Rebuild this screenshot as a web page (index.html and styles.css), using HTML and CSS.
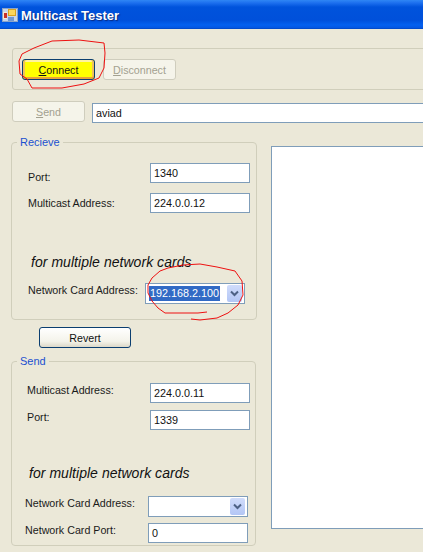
FILE: index.html
```html
<!DOCTYPE html>
<html lang="en">
<head>
<meta charset="utf-8">
<title>Multicast Tester</title>
<link rel="stylesheet" href="styles.css">
</head>
<body>
<header class="titlebar">
  <svg class="appicon" width="16" height="14" viewBox="0 0 16 14">
    <rect x="0" y="0" width="16" height="14" fill="#c9d6ea"/>
    <rect x="0.5" y="0.5" width="15" height="13" fill="none" stroke="#8ba4c8"/>
    <rect x="1" y="4" width="4" height="7" fill="#f2ead8"/>
    <rect x="2" y="5" width="3" height="5" fill="#c8302a"/>
    <rect x="6" y="1" width="8" height="7" fill="#d9a21f"/>
    <rect x="7" y="2" width="6" height="5" fill="#fbd65c"/>
    <rect x="6" y="9" width="6" height="4" fill="#6f97d2"/>
  </svg>
  <span class="title">Multicast Tester</span>
</header>
<main class="client">
  <div class="toolbar">
    <button class="btn btn-connect" type="button"><u>C</u>onnect</button>
    <button class="btn btn-off" type="button"><u>D</u>isconnect</button>
  </div>
  <div class="sendrow">
    <button class="btn btn-off" type="button"><u>S</u>end</button>
    <div class="field field-wide">aviad</div>
  </div>
  <div class="panes">
    <div class="leftcol">
      <fieldset class="group group-rx">
        <legend>Recieve</legend>
        <div class="row row-a"><label class="lab lab-port">Port:</label><div class="field">1340</div></div>
        <div class="row row-b"><label class="lab">Multicast Address:</label><div class="field">224.0.0.12</div></div>
        <p class="note note-rx">for multiple network cards</p>
        <div class="row row-c"><label class="lab lab-short">Network Card Address:</label>
          <div class="combo"><span class="sel">192.168.2.100</span>
            <span class="drop"><svg width="9" height="7" viewBox="0 0 9 7"><path d="M1 1.5 4.5 5 8 1.5" fill="none" stroke="#4d6185" stroke-width="2"/></svg></span></div>
        </div>
      </fieldset>
      <button class="btn btn-revert" type="button">Revert</button>
      <fieldset class="group group-tx">
        <legend>Send</legend>
        <div class="row row-d"><label class="lab lab-up">Multicast Address:</label><div class="field">224.0.0.11</div></div>
        <div class="row row-e"><label class="lab lab-up">Port:</label><div class="field">1339</div></div>
        <p class="note note-tx">for multiple network cards</p>
        <div class="row row-f"><label class="lab lab-up lab-out">Network Card Address:</label>
          <div class="combo combo-tx"><span class="drop"><svg width="9" height="7" viewBox="0 0 9 7"><path d="M1 1.5 4.5 5 8 1.5" fill="none" stroke="#4d6185" stroke-width="2"/></svg></span></div>
        </div>
        <div class="row row-g"><label class="lab lab-up lab-out">Network Card Port:</label><div class="field">0</div></div>
      </fieldset>
    </div>
    <div class="output"></div>
  </div>
</main>
<svg class="scribbles" width="423" height="552" viewBox="0 0 423 552">
  <path d="M79 40 104 43 105 53 104 68 99 78 84 84 62 88 32 88 27 79 20 74 19 61 22 54 34 48 52 41Z" />
  <path d="M207 312 198 313 177 313 165 313 158 308 152 301 148 293 148 285 152 278 160 271 168 268 183 265 200 264 217 267 235 271 242 281 243 295 238 305 228 313 217 318 200 320 191 319" />
</svg>
</body>
</html>
```
FILE: styles.css
```css
* { box-sizing: border-box; }
html, body { margin: 0; height: 552px; overflow: hidden; }
body {
  position: relative;
  background: #ebe8d8;
  font: 10.7px "Liberation Sans", Arial, sans-serif;
  color: #1a1a1a;
}
.titlebar {
  height: 29px;
  display: flex;
  align-items: center;
  padding: 1px 0 0 2px;
  gap: 3px;
  background: linear-gradient(#2f86f5 0, #1c6fee 3px, #0053dc 7px, #0050da 20px, #0461f0 25px, #0556e0 28px, #0042b8 29px);
}
.appicon { flex: none; }
.title {
  color: #fff;
  font-weight: bold;
  font-size: 13px;
  text-shadow: 1px 1px 1px #0a2a80;
}
.client { width: 423px; }
.toolbar {
  width: 500px;
  height: 42px;
  margin: 19px 0 0 12px;
  padding: 10px 0 0 9px;
  display: flex;
  gap: 8px;
  border: 1px solid #d0cebb;
  border-radius: 3px;
}
.btn {
  width: 73px;
  height: 21px;
  padding: 0;
  border-radius: 3px;
  font: inherit;
}
.btn-connect {
  background: #ffff00;
  color: #111;
  border: 1px solid #0b3e70;
  box-shadow: inset 0 -2px 0 #e8a33a, inset 2px 0 0 #efc25a, inset -2px 0 0 #efc25a, inset 0 2px 0 #fff4a0;
}
.btn-off {
  background: #f5f4ea;
  color: #a3a190;
  border: 1px solid #cfcdbd;
}
.btn-revert {
  display: block;
  width: 92px;
  margin: 7px 0 0 28px;
  background: linear-gradient(#ffffff, #f4f3ea 70%, #dcd8c8);
  color: #111;
  border: 1px solid #0b3e70;
}
.sendrow {
  display: flex;
  align-items: flex-start;
  gap: 7px;
  margin: 11px 0 0 12px;
  width: 600px;
}
.field {
  width: 100px;
  height: 20px;
  padding: 0 3px;
  flex: none;
  background: #fff;
  border: 1px solid #7f9db9;
  font-size: 10.8px;
  line-height: 18px;
  color: #111;
}
.field-wide { width: 500px; margin-top: 2px; }
.panes {
  display: flex;
  align-items: flex-start;
  margin: 12px 0 0 11px;
}
.leftcol { width: 246px; flex: none; }
.group {
  margin: 0;
  padding: 0 0 0 16px;
  min-width: 0;
  border: 1px solid #d0cebb;
  border-radius: 4px;
}
.group legend {
  margin-left: -11px;
  padding: 0 3px;
  font-size: 11px;
  line-height: 14px;
  color: #1b50d0;
}
.group-rx { height: 185px; padding-top: 14px; }
.group-tx { width: 245px; height: 192px; margin-top: 6px; padding: 15px 0 0 15px; }
.group-tx legend { margin-left: -10px; }
.row { display: flex; align-items: flex-start; }
.row-b { margin-top: 9px; }
.row-c { margin-top: 12px; }
.row-e { margin-top: 7px; }
.row-f { margin-top: 14px; }
.row-g { margin-top: 6px; }
.lab { width: 122px; flex: none; line-height: 14px; padding-top: 3px; }
.lab-port { padding-top: 7px; }
.lab-short { width: 117px; padding-top: 0; white-space: nowrap; }
.lab-up { width: 123px; padding-top: 0; }
.lab-out { margin-left: -2px; white-space: nowrap; }
.note {
  margin: 40px 0 0 3px;
  font-style: italic;
  font-size: 14px;
  letter-spacing: 0.04px;
  line-height: 18px;
  color: #111;
}
.note-tx { margin: 34px 0 0 2px; }
.combo {
  width: 100px;
  height: 21px;
  display: flex;
  align-items: center;
  justify-content: space-between;
  padding: 2px 2px 2px 3px;
  background: #fff;
  border: 1px solid #7f9db9;
}
.combo-tx { justify-content: flex-end; }
.sel {
  background: #316ac5;
  color: #fff;
  font-size: 10.8px;
  line-height: 15px;
  padding: 0 1px;
}
.drop {
  width: 15px;
  height: 17px;
  display: flex;
  align-items: center;
  justify-content: center;
  background: linear-gradient(#d0dcfb, #b3c6f5);
  border-radius: 2px;
}
.output {
  width: 300px;
  height: 383px;
  margin: 11px 0 0 14px;
  flex: none;
  background: #fff;
  border: 1px solid #7f9db9;
}
.scribbles {
  position: absolute;
  left: 0;
  top: 0;
  pointer-events: none;
}
.scribbles path { fill: none; stroke: #ee1111; stroke-width: 1; }
```
